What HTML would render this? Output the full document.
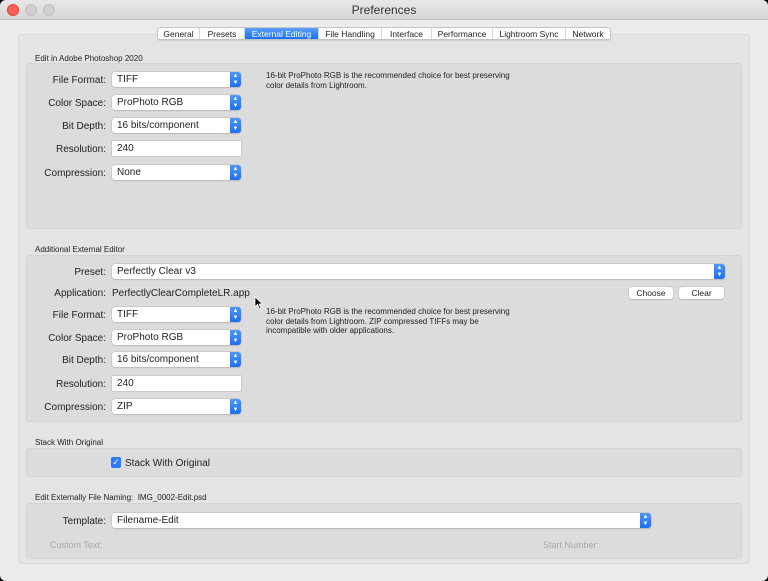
<!DOCTYPE html>
<html><head><meta charset="utf-8"><style>
*{box-sizing:border-box;margin:0;padding:0}
body{width:768px;height:581px;background:#000;font-family:"Liberation Sans",sans-serif;font-size:10px;color:#222;position:relative;overflow:hidden}
.win{position:absolute;left:0;top:0;width:768px;height:581px;background:#ececec;border-radius:6px}
.title{position:absolute;top:0;left:0;width:768px;height:20px;background:linear-gradient(#e8e8e8,#d6d6d6);border-bottom:1px solid #c4c4c4;border-radius:6px 6px 0 0;text-align:center;font-size:12px;line-height:20px;color:#333}
.dot{position:absolute;top:4px;width:12px;height:12px;border-radius:50%;background:#d0d0d0;border:1px solid #c0c0c0}
.outer{position:absolute;left:18px;top:34px;width:732px;height:530px;background:#e4e4e4;border:1px solid #dadada;border-radius:3px}
.tabs{position:absolute;top:27px;left:157px;height:13px;display:flex;background:#fff;border:1px solid #c4c4c4;border-radius:3px;box-shadow:0 1px 1px rgba(0,0,0,.1)}
.tabs div{font-size:8.5px;line-height:12px;text-align:center;border-right:1px solid #d6d6d6;color:#222}
.tabs .on{background:linear-gradient(#5aa0fb,#1a6ef2);color:#fff}
.lbl{position:absolute;left:35px;font-size:8px;color:#222}
.box{position:absolute;left:26px;width:716px;background:#dcdcdc;border:1px solid #d4d4d4;border-radius:3px}
.fl{position:absolute;width:106px;left:0;text-align:right;font-size:10px;color:#222}
.pop{position:absolute;left:112px;width:129px;height:15px;background:#fff;border-radius:3px;box-shadow:0 0 0 .5px #b8b8b8,0 1px 1px rgba(0,0,0,.15);font-size:10px;line-height:15px;padding-left:5px}
.pop .ar{position:absolute;right:0;top:0;width:11px;height:15px;background:linear-gradient(#4d97fb,#1b6ff1);border-radius:0 3px 3px 0;color:#fff;font-size:6px;line-height:7px;text-align:center;padding-top:1px}
.txt{position:absolute;left:112px;width:129px;height:15px;background:#fff;box-shadow:0 0 0 .5px #b8b8b8;font-size:10px;line-height:15px;padding-left:5px}
.note{position:absolute;left:266px;font-size:8px;line-height:9.5px;color:#222}
.btn{position:absolute;height:12px;background:#fff;border-radius:3px;box-shadow:0 0 0 .5px #bbb,0 1px 1px rgba(0,0,0,.15);font-size:8.5px;line-height:12px;text-align:center}
.gr{color:#a8a8a8}
</style></head><body><div class="win">
<div class="title">Preferences
<div class="dot" style="left:7px;background:#fc5f57;border-color:#e0443e"></div>
<div class="dot" style="left:25px"></div><div class="dot" style="left:43px"></div></div>
<div class="outer"></div>
<div class="tabs">
<div style="width:42px">General</div><div style="width:45px">Presets</div><div class="on" style="width:74px">External Editing</div><div style="width:63px">File Handling</div><div style="width:50px">Interface</div><div style="width:61px">Performance</div><div style="width:73px">Lightroom Sync</div><div style="width:44px;border:0">Network</div></div>

<div class="lbl" style="top:54px">Edit in Adobe Photoshop 2020</div>
<div class="box" style="top:63px;height:166px"></div>
<div class="fl" style="top:75px">File Format:</div><div class="pop" style="top:72px">TIFF<div class="ar">▲<br>▼</div></div>
<div class="fl" style="top:98px">Color Space:</div><div class="pop" style="top:95px">ProPhoto RGB<div class="ar">▲<br>▼</div></div>
<div class="fl" style="top:121px">Bit Depth:</div><div class="pop" style="top:118px">16 bits/component<div class="ar">▲<br>▼</div></div>
<div class="fl" style="top:144px">Resolution:</div><div class="txt" style="top:141px">240</div>
<div class="fl" style="top:168px">Compression:</div><div class="pop" style="top:165px">None<div class="ar">▲<br>▼</div></div>
<div class="note" style="top:71px">16-bit ProPhoto RGB is the recommended choice for best preserving<br>color details from Lightroom.</div>

<div class="lbl" style="top:245px">Additional External Editor</div>
<div class="box" style="top:255px;height:167px"></div>
<div class="fl" style="top:267px">Preset:</div><div class="pop" style="top:264px;width:613px">Perfectly Clear v3<div class="ar">▲<br>▼</div></div>
<div class="fl" style="top:288px">Application:</div><div style="position:absolute;left:112px;top:288px;font-size:10px">PerfectlyClearCompleteLR.app</div>
<div class="btn" style="left:629px;top:287px;width:44px">Choose</div><div class="btn" style="left:679px;top:287px;width:45px">Clear</div>
<div class="fl" style="top:310px">File Format:</div><div class="pop" style="top:307px">TIFF<div class="ar">▲<br>▼</div></div>
<div class="fl" style="top:333px">Color Space:</div><div class="pop" style="top:330px">ProPhoto RGB<div class="ar">▲<br>▼</div></div>
<div class="fl" style="top:355px">Bit Depth:</div><div class="pop" style="top:352px">16 bits/component<div class="ar">▲<br>▼</div></div>
<div class="fl" style="top:379px">Resolution:</div><div class="txt" style="top:376px">240</div>
<div class="fl" style="top:402px">Compression:</div><div class="pop" style="top:399px">ZIP<div class="ar">▲<br>▼</div></div>
<div class="note" style="top:307px">16-bit ProPhoto RGB is the recommended choice for best preserving<br>color details from Lightroom. ZIP compressed TIFFs may be<br>incompatible with older applications.</div>
<svg style="position:absolute;left:254px;top:296px" width="10" height="14"><path d="M1 1 L1 11 L3.5 8.5 L5.5 13 L7 12.3 L5 8 L8.5 8 Z" fill="#000" stroke="#fff" stroke-width=".8"/></svg>

<div class="lbl" style="top:438px">Stack With Original</div>
<div class="box" style="top:448px;height:29px"></div>
<div style="position:absolute;left:111px;top:457px;width:10px;height:11px;background:#2a7bf4;border-radius:2px;color:#fff;font-size:9px;line-height:11px;text-align:center">✓</div>
<div style="position:absolute;left:125px;top:458px;font-size:10px">Stack With Original</div>

<div class="lbl" style="top:493px">Edit Externally File Naming:&nbsp; IMG_0002-Edit.psd</div>
<div class="box" style="top:503px;height:56px"></div>
<div class="fl" style="top:516px">Template:</div><div class="pop" style="top:513px;width:539px">Filename-Edit<div class="ar">▲<br>▼</div></div>
<div class="gr" style="position:absolute;left:50px;top:540px;font-size:9px">Custom Text:</div>
<div class="gr" style="position:absolute;left:543px;top:540px;font-size:9px">Start Number:</div>
</div></body></html>
